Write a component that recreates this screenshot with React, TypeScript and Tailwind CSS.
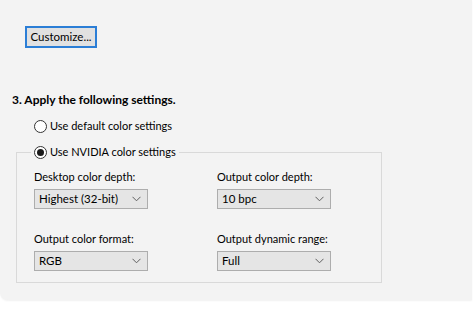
import React from "react";

const font = { fontFamily: 'Lato, "Noto Sans", sans-serif' };

function Chevron() {
  return (
    <svg width="9" height="6" viewBox="0 0 9 6" className="shrink-0">
      <path d="M0.5 0.8 L4.5 4.8 L8.5 0.8" fill="none" stroke="#5f5f5f" strokeWidth="1" />
    </svg>
  );
}

function Select({ value }: { value: string }) {
  return (
    <div className="flex h-[20px] w-[114px] items-center justify-between border border-[#adadad] bg-[#e5e5e5] pl-[4px] pr-[6px] text-[11.5px] leading-none text-black">
      <span>{value}</span>
      <Chevron />
    </div>
  );
}

function Radio({ checked, label }: { checked?: boolean; label: string }) {
  return (
    <div className="flex h-[16px] items-center gap-[3px] whitespace-nowrap text-[11px] text-black">
      <span className="flex h-[13px] w-[13px] items-center justify-center rounded-full border border-[#333] bg-white">
        {checked && <span className="h-[7px] w-[7px] rounded-full bg-[#1a1a1a]" />}
      </span>
      <span>{label}</span>
    </div>
  );
}

function Field({ label, value }: { label: string; value: string }) {
  return (
    <div className="flex flex-col">
      <div className="flex h-[16px] items-center whitespace-nowrap text-[11px] text-black">{label}</div>
      <div className="mt-[4px] flex">
        <Select value={value} />
      </div>
    </div>
  );
}

export default function App() {
  return (
    <div className="h-[324px] w-[474px] overflow-hidden bg-white" style={font}>
      <div className="flex h-[300px] w-[472px] flex-col rounded-bl-[8px] bg-[#f3f3f3] pt-[26px] shadow-[0_1px_2px_rgba(0,0,0,0.06)]">
        <div className="flex pl-[25px]">
          <button className="flex h-[22px] w-[72px] items-center justify-center border-2 border-[#2b7ed6] bg-[#e1e1e1] text-[11.5px] leading-none text-black">
            Customize...
          </button>
        </div>

        <h3 className="mt-[44px] flex h-[16px] items-center pl-[12px] text-[12px] font-bold text-black">
          3. Apply the following settings.
        </h3>

        <div className="mt-[10px] flex pl-[34px]">
          <Radio label="Use default color settings" />
        </div>

        <fieldset className="ml-[16px] mt-[10px] w-[366px] border border-[#d9d9d9] px-[14px] pb-[11px]">
          <legend className="px-[3px]">
            <Radio checked label="Use NVIDIA color settings" />
          </legend>
          <div className="grid grid-cols-[183px_114px] gap-y-[22px] pl-[3px] pt-[9px]">
            <Field label="Desktop color depth:" value="Highest (32-bit)" />
            <Field label="Output color depth:" value="10 bpc" />
            <Field label="Output color format:" value="RGB" />
            <Field label="Output dynamic range:" value="Full" />
          </div>
        </fieldset>
      </div>
    </div>
  );
}
